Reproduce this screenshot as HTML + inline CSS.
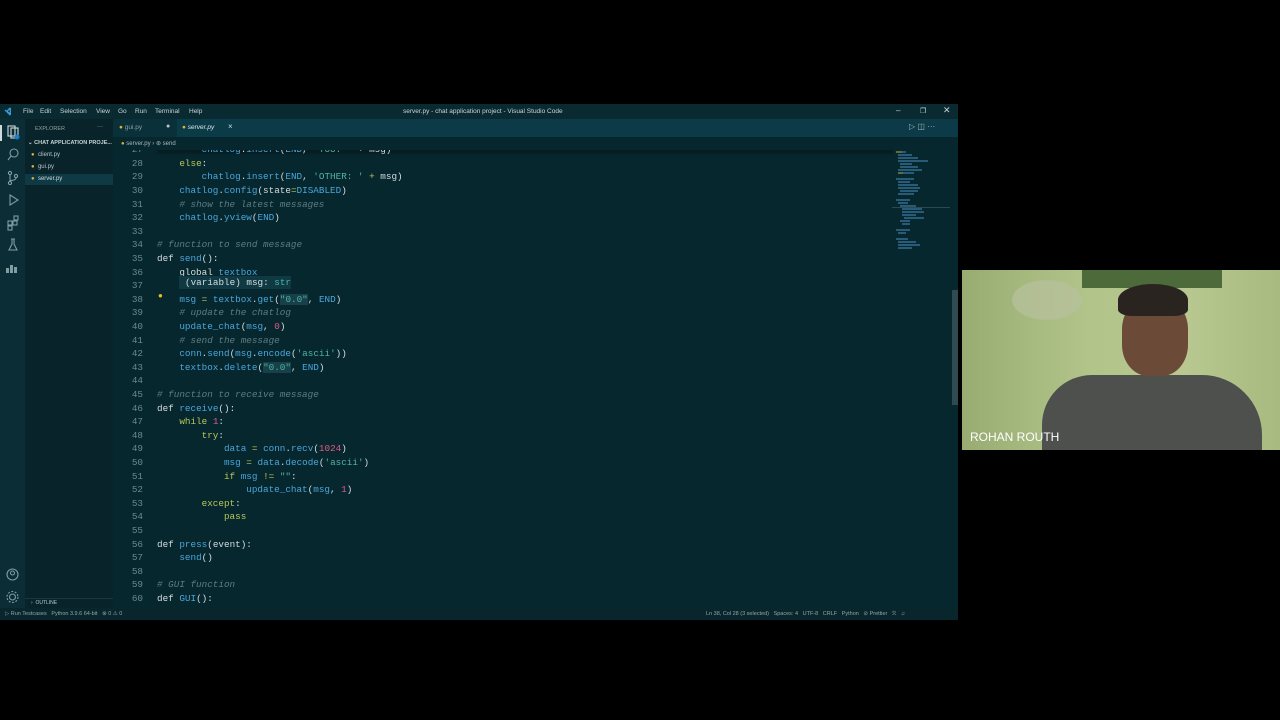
<!DOCTYPE html>
<html><head><meta charset="utf-8"><style>
*{margin:0;padding:0;box-sizing:border-box}
body{width:1280px;height:720px;background:#000;position:relative;overflow:hidden;font-family:"Liberation Sans",sans-serif}
.abs{position:absolute}
#win{left:0;top:104px;width:958px;height:516px;background:#07272e;overflow:hidden}
#title{left:0;top:0;width:958px;height:15px;background:#0a2a32;color:#c8d4d8;font-size:6.5px}
#title span{position:absolute;top:4px}
#act{left:0;top:15px;width:25px;height:489px;background:#0b2d35}
#side{left:25px;top:15px;width:88px;height:489px;background:#082329;color:#b8c6ca;font-size:6px}
#tabs{left:113px;top:15px;width:845px;height:18px;background:#0c3a46}
#crumb{left:113px;top:33px;width:845px;height:13px;background:#07272e;color:#a8b8bc;font-size:6px}
#status{left:0;top:504px;width:958px;height:12px;background:#0a262d;color:#8fa6ab;font-size:5.5px}
#code{left:113px;top:46px;width:780px;height:458px;overflow:hidden}
.ln{position:absolute;left:0;width:30px;text-align:right;color:#6a8a90;font:9.3px "Liberation Mono",monospace}
.cl{position:absolute;left:44px;white-space:pre;color:#d6dde0;font:9.3px "Liberation Mono",monospace}
.k{color:#d6dde0}.f{color:#4aa6dc}.y{color:#b5c95a}.c{color:#5d7d84;font-style:italic}.s{color:#4fb3a2}.n{color:#e05a86}.v{color:#4aa6dc}.o{color:#b5c95a}
</style></head><body>
<div id="win" class="abs">
 <div id="title" class="abs">
  <svg class="abs" style="left:4px;top:3px" width="9" height="9" viewBox="0 0 10 10"><path d="M7 1L3 5l4 4M7 1v8M1 3.5l6 4" stroke="#3a9ad9" stroke-width="1.5" fill="none"/></svg>
  <span style="left:23px">File</span><span style="left:40px">Edit</span><span style="left:60px">Selection</span><span style="left:96px">View</span><span style="left:118px">Go</span><span style="left:135px">Run</span><span style="left:155px">Terminal</span><span style="left:189px">Help</span>
  <span style="left:403px">server.py - chat application project - Visual Studio Code</span>
  <span style="left:896px;font-size:8px;top:2px">–</span><span style="left:920px;font-size:7px;top:3px">❐</span><span style="left:943px;font-size:9px;top:1px">✕</span>
 </div>
 <div id="act" class="abs">
  <div class="abs" style="left:0;top:6px;width:2px;height:16px;background:#cfd8dc"></div>
  <svg class="abs" style="left:6px;top:6px" width="14" height="130" viewBox="0 0 14 130" fill="none" stroke="#7f9da3" stroke-width="1.1">
   <rect x="2" y="1" width="7" height="10" stroke="#d0dadd"/><rect x="5" y="3" width="7" height="10" stroke="#d0dadd"/>
   <circle cx="11" cy="12" r="2.5" fill="#1a7fd0" stroke="none"/>
   <circle cx="8" cy="28" r="4"/><path d="M5 31l-3 4"/>
   <circle cx="4" cy="48" r="1.6"/><circle cx="4" cy="58" r="1.6"/><circle cx="10" cy="51" r="1.6"/><path d="M4 50v6M10 53c0 3-6 2-6 3"/>
   <path d="M4 70l8 5-8 5z"/>
   <rect x="2" y="96" width="4" height="4"/><rect x="7" y="96" width="4" height="4"/><rect x="2" y="101" width="4" height="4"/><rect x="8" y="91" width="4" height="4"/>
   <path d="M5 114h4M6 114v5l-3 6h8l-3-6v-5"/>
  </svg>
  <div class="abs" style="left:6px;top:149px;width:3px;height:5px;background:#7f9da3"></div><div class="abs" style="left:10px;top:146px;width:3px;height:8px;background:#7f9da3"></div><div class="abs" style="left:14px;top:148px;width:3px;height:6px;background:#7f9da3"></div>
  <svg class="abs" style="left:6px;top:449px" width="13" height="36" viewBox="0 0 13 36" fill="none" stroke="#7f9da3" stroke-width="1.1"><circle cx="6.5" cy="6.5" r="5.5"/><circle cx="6.5" cy="5" r="2"/><circle cx="6.5" cy="29" r="3"/><circle cx="6.5" cy="29" r="5.5" stroke-dasharray="2 1.5"/></svg>
 </div>
 <div id="side" class="abs">
  <div class="abs" style="left:10px;top:7px;color:#8fa3a8;font-size:5.5px">EXPLORER</div>
  <div class="abs" style="left:72px;top:5px;color:#b8c6ca">···</div>
  <div class="abs" style="left:3px;top:21px;font-weight:bold;font-size:5.5px;color:#c8d4d8">⌄ CHAT APPLICATION PROJE...</div>
  <div class="abs" style="left:6px;top:33px"><span style="color:#e0b040">●</span> &nbsp;client.py</div>
  <div class="abs" style="left:6px;top:45px"><span style="color:#e0b040">●</span> &nbsp;gui.py</div>
  <div class="abs" style="left:0;top:55px;width:88px;height:11px;background:#0f3a45"></div>
  <div class="abs" style="left:6px;top:57px;color:#d0dadd"><span style="color:#e0b040">●</span> &nbsp;server.py</div>
  <div class="abs" style="left:0;top:479px;width:88px;height:1px;background:#163a42"></div>
  <div class="abs" style="left:6px;top:481px;font-size:5px">›&nbsp; OUTLINE</div>
 </div>
 <div id="tabs" class="abs">
  <div class="abs" style="left:0;top:0;width:64px;height:18px;background:#0a3039"></div>
  <div class="abs" style="left:6px;top:5px;font-size:6.5px;color:#8aa0a5"><span style="color:#e0b040">●</span> gui.py</div>
  <div class="abs" style="left:53px;top:4px;font-size:7px;color:#b8c6ca">●</div>
  <div class="abs" style="left:64px;top:0;width:62px;height:18px;background:#0b3b47"></div>
  <div class="abs" style="left:69px;top:5px;font-size:6.5px;color:#e0e8ea;font-style:italic"><span style="color:#e0b040;font-style:normal">●</span> server.py</div>
  <div class="abs" style="left:115px;top:3px;font-size:8px;color:#cfd8dc">×</div>
  <div class="abs" style="left:796px;top:3px;font-size:8px;color:#9fb5ba">▷ ◫ ···</div>
 </div>
 <div id="crumb" class="abs"><div class="abs" style="left:8px;top:3px"><span style="color:#e0b040">●</span> server.py › ⊛ send</div></div>
 <div id="code" class="abs">
  <div class="abs" style="left:44px;top:0;width:740px;height:1px;background:#0a1a1e;box-shadow:0 1px 3px #000"></div>
 </div>
 <div class="abs" style="left:892px;top:46px;width:60px;height:458px">
  <svg width="60" height="110" viewBox="0 0 60 110"><g stroke-width="1">
   <path d="M4 2h10M6 5h14M6 8h20M6 11h30M8 14h12M8 17h18M6 20h24M6 23h16M4 29h18M6 32h12M6 35h20M6 38h22M8 41h18M6 44h16M4 50h14M6 53h10M8 56h16M10 59h20M10 62h22M10 65h14M12 68h20M8 71h10M10 74h8M4 80h14M6 83h8M4 89h12M6 92h18M6 95h22M6 98h14" stroke="#4a8fc0"/>
   <path d="M4 2h6M6 23h5" stroke="#c0b050"/></g></svg>
  <div class="abs" style="left:0;top:57px;width:58px;height:1px;background:#2a4a50"></div>
  <div class="abs" style="left:60px;top:140px;width:6px;height:115px;background:#2f4a50"></div>
 </div>
 <div id="status" class="abs">
  <span class="abs" style="left:5px;top:3px">▷ Run Testcases &nbsp;&nbsp;Python 3.9.6 64-bit &nbsp;&nbsp;⊗ 0 ⚠ 0</span>
  <span class="abs" style="left:706px;top:3px">Ln 38, Col 28 (3 selected) &nbsp;&nbsp;Spaces: 4 &nbsp;&nbsp;UTF-8 &nbsp;&nbsp;CRLF &nbsp;&nbsp;Python &nbsp;&nbsp;⊘ Prettier &nbsp;&nbsp;ℛ &nbsp;&nbsp;♫</span>
 </div>
</div>
<script>
const L=[
[27,'        <span class="f">chatlog</span>.<span class="f">insert</span>(<span class="v">END</span>, <span class="s">\'YOU: \'</span> + msg)'],
[28,'    <span class="y">else</span>:'],
[29,'        <span class="f">chatlog</span>.<span class="f">insert</span>(<span class="v">END</span>, <span class="s">\'OTHER: \'</span> <span class="o">+</span> msg)'],
[30,'    <span class="f">chatlog</span>.<span class="f">config</span>(state<span class="o">=</span><span class="v">DISABLED</span>)'],
[31,'    <span class="c"># show the latest messages</span>'],
[32,'    <span class="f">chatlog</span>.<span class="f">yview</span>(<span class="v">END</span>)'],
[33,''],
[34,'<span class="c"># function to send message</span>'],
[35,'<span class="k">def</span> <span class="f">send</span>():'],
[36,'    global <span class="v">textbox</span>'],
[37,''],
[38,'    <span class="v">msg</span> <span class="o">=</span> <span class="f">textbox</span>.<span class="f">get</span>(<span class="s" style="background:#17404a">"0.0"</span>, <span class="v">END</span>)'],
[39,'    <span class="c"># update the chatlog</span>'],
[40,'    <span class="f">update_chat</span>(<span class="v">msg</span>, <span class="n">0</span>)'],
[41,'    <span class="c"># send the message</span>'],
[42,'    <span class="f">conn</span>.<span class="f">send</span>(<span class="v">msg</span>.<span class="f">encode</span>(<span class="s">\'ascii\'</span>))'],
[43,'    <span class="f">textbox</span>.<span class="f">delete</span>(<span class="s" style="background:#17404a">"0.0"</span>, <span class="v">END</span>)'],
[44,''],
[45,'<span class="c"># function to receive message</span>'],
[46,'<span class="k">def</span> <span class="f">receive</span>():'],
[47,'    <span class="y">while</span> <span class="n">1</span>:'],
[48,'        <span class="y">try</span>:'],
[49,'            <span class="v">data</span> <span class="o">=</span> <span class="f">conn</span>.<span class="f">recv</span>(<span class="n">1024</span>)'],
[50,'            <span class="v">msg</span> <span class="o">=</span> <span class="f">data</span>.<span class="f">decode</span>(<span class="s">\'ascii\'</span>)'],
[51,'            <span class="y">if</span> <span class="v">msg</span> <span class="o">!=</span> <span class="s">""</span>:'],
[52,'                <span class="f">update_chat</span>(<span class="v">msg</span>, <span class="n">1</span>)'],
[53,'        <span class="y">except</span>:'],
[54,'            <span class="y">pass</span>'],
[55,''],
[56,'<span class="k">def</span> <span class="f">press</span>(event):'],
[57,'    <span class="f">send</span>()'],
[58,''],
[59,'<span class="c"># GUI function</span>'],
[60,'<span class="k">def</span> <span class="f">GUI</span>():'],
[61,'    global <span class="v">chatlog</span>']];
let h='';
for(const [n,t] of L){const top=(n-27)*13.6-5.8;
h+=`<div class="ln" style="top:${top}px">${n}</div><div class="cl" style="top:${top}px">${t}</div>`;}
h+='<div class="abs" style="left:66px;top:126px;width:112px;height:13px;background:#0f3a44;color:#d6dde0;font:9.3px \'Liberation Mono\',monospace;padding:1px 6px;white-space:pre">(variable) msg: <span style="color:#4fb3a2">str</span></div>';
h+='<div class="abs" style="left:45px;top:141px;color:#e8c020;font-size:8px">●</div>';
document.getElementById('code').insertAdjacentHTML('beforeend',h);
</script>
<div class="abs" style="left:962px;top:270px;width:318px;height:180px;background:#a9bb82;overflow:hidden">
 <div class="abs" style="left:0;top:0;width:318px;height:180px;background:linear-gradient(90deg,#98ac72,#b2c48a 40%,#b8c890 70%,#a8ba80)"></div>
 <div class="abs" style="left:120px;top:0;width:140px;height:18px;background:#4d6a3a"></div>
 <div class="abs" style="left:50px;top:10px;width:70px;height:40px;border-radius:50%;background:#b8c09c;opacity:.7"></div>
 <div class="abs" style="left:80px;top:105px;width:220px;height:90px;border-radius:50px 60px 0 0;background:#4d504c"></div>
 <div class="abs" style="left:160px;top:28px;width:66px;height:78px;border-radius:40%;background:#6b4a38"></div>
 <div class="abs" style="left:156px;top:14px;width:70px;height:32px;border-radius:50% 50% 20% 20%;background:#2a2420"></div>
 <div class="abs" style="left:8px;top:160px;color:#fff;font-size:12px">ROHAN ROUTH</div>
</div>
</body></html>
